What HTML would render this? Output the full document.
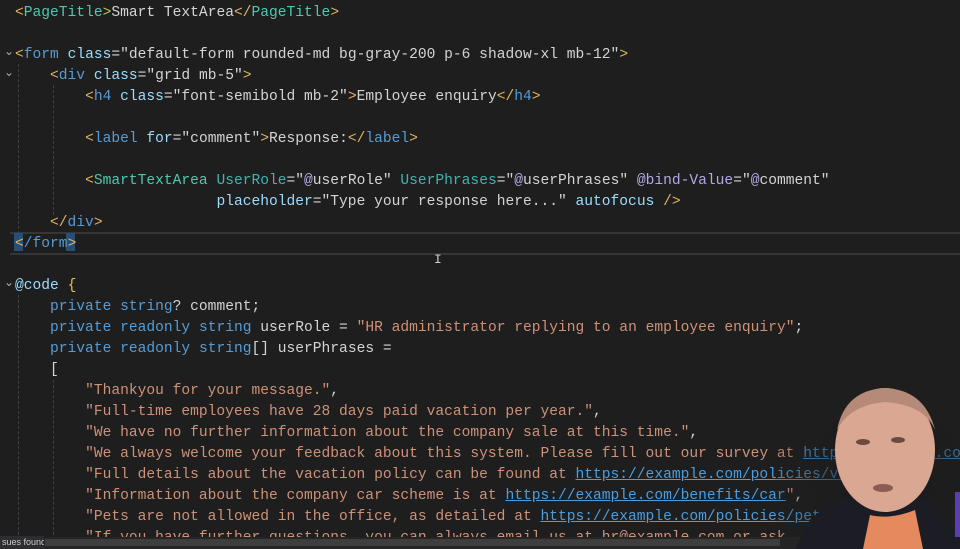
<!DOCTYPE html>
<html><head><meta charset="utf-8"><style>
html,body{margin:0;padding:0;background:#1e1e1e;width:960px;height:549px;overflow:hidden;position:relative}
.code{position:absolute;left:15px;top:3px;font-family:"Liberation Mono",monospace;font-size:14.6px;line-height:21px;color:#d4d4d4;white-space:normal}
.l{height:21px;white-space:pre}
.b{color:#e0b460}.t{color:#4ec9b0}.h{color:#569cd6}.a{color:#9cdcfe}.ta{color:#3fb5b0}.p{color:#b4a7e8}
.k{color:#569cd6}.s{color:#ce9178}.u{color:#4a9ee0;text-decoration:underline}.y{color:#e8c43f}
.cur{position:absolute;left:10px;right:0;top:232px;height:19px;border-top:2px solid #353535;border-bottom:2px solid #353535}
.guide{position:absolute;width:0;border-left:1px dashed #404040}
.sb{position:absolute;left:0;top:537px;width:960px;height:12px;background:#252526}
.thumb{position:absolute;left:45px;top:539px;width:735px;height:7px;background:#3e3e3e}
</style></head><body>
<div class="cur"></div>
<div class="guide" style="left:18px;top:64px;height:170px"></div>
<div class="guide" style="left:53px;top:85px;height:130px"></div>
<div class="guide" style="left:18px;top:295px;height:240px"></div>
<div class="guide" style="left:53px;top:380px;height:155px"></div>
<div style="position:absolute;left:4px;top:44px;color:#aaa;font:12px 'DejaVu Sans';">⌄</div>
<div style="position:absolute;left:4px;top:65px;color:#aaa;font:12px 'DejaVu Sans';">⌄</div>
<div style="position:absolute;left:4px;top:275px;color:#aaa;font:12px 'DejaVu Sans';">⌄</div>
<div style="position:absolute;left:14px;top:233px;width:9px;height:18px;background:#264f78"></div>
<div style="position:absolute;left:66px;top:233px;width:9px;height:18px;background:#264f78"></div>
<div class="code"><div class="l"><span class="b">&lt;</span><span class="t">PageTitle</span><span class="b">&gt;</span>Smart TextArea<span class="b">&lt;/</span><span class="t">PageTitle</span><span class="b">&gt;</span></div><div class="l"> </div><div class="l"><span class="b">&lt;</span><span class="h">form</span> <span class="a">class</span>="default-form rounded-md bg-gray-200 p-6 shadow-xl mb-12"<span class="b">&gt;</span></div><div class="l">    <span class="b">&lt;</span><span class="h">div</span> <span class="a">class</span>="grid mb-5"<span class="b">&gt;</span></div><div class="l">        <span class="b">&lt;</span><span class="h">h4</span> <span class="a">class</span>="font-semibold mb-2"<span class="b">&gt;</span>Employee enquiry<span class="b">&lt;/</span><span class="h">h4</span><span class="b">&gt;</span></div><div class="l"> </div><div class="l">        <span class="b">&lt;</span><span class="h">label</span> <span class="a">for</span>="comment"<span class="b">&gt;</span>Response:<span class="b">&lt;/</span><span class="h">label</span><span class="b">&gt;</span></div><div class="l"> </div><div class="l">        <span class="b">&lt;</span><span class="t">SmartTextArea</span> <span class="ta">UserRole</span>="<span class="p">@</span>userRole" <span class="ta">UserPhrases</span>="<span class="p">@</span>userPhrases" <span class="p">@bind-Value</span>="<span class="p">@</span>comment"</div><div class="l">                       <span class="a">placeholder</span>="Type your response here..." <span class="a">autofocus</span> <span class="b">/&gt;</span></div><div class="l">    <span class="b">&lt;/</span><span class="h">div</span><span class="b">&gt;</span></div><div class="l"><span class="b">&lt;</span><span class="h">/form</span><span class="b">&gt;</span></div><div class="l"> </div><div class="l"><span class="a">@code</span> <span class="y">{</span></div><div class="l">    <span class="k">private</span> <span class="k">string</span>? comment;</div><div class="l">    <span class="k">private</span> <span class="k">readonly</span> <span class="k">string</span> userRole = <span class="s">"HR administrator replying to an employee enquiry"</span>;</div><div class="l">    <span class="k">private</span> <span class="k">readonly</span> <span class="k">string</span>[] userPhrases =</div><div class="l">    [</div><div class="l">        <span class="s">"Thankyou for your message."</span>,</div><div class="l">        <span class="s">"Full-time employees have 28 days paid vacation per year."</span>,</div><div class="l">        <span class="s">"We have no further information about the company sale at this time."</span>,</div><div class="l">        <span class="s">"We always welcome your feedback about this system. Please fill out our survey at </span><span class="u">https://example.com</span></div><div class="l">        <span class="s">"Full details about the vacation policy can be found at </span><span class="u">https://example.com/policies/vacation</span></div><div class="l">        <span class="s">"Information about the company car scheme is at </span><span class="u">https://example.com/benefits/car</span><span class="s">"</span>,</div><div class="l">        <span class="s">"Pets are not allowed in the office, as detailed at </span><span class="u">https://example.com/policies/pets</span></div><div class="l">        <span class="s">"If you have further questions, you can always email us at hr@example.com or ask</span></div></div>
<div style="position:absolute;left:434px;top:252px;color:#ccc;font:13px 'Liberation Mono'">I</div>
<div class="sb"></div><div class="thumb"></div>
<div style="position:absolute;left:0;top:536px;width:42px;height:13px;background:#2d2d30;color:#ccc;font:9px 'Liberation Sans';line-height:13px;padding-left:2px;white-space:nowrap;overflow:hidden">sues found</div>
<svg style="position:absolute;left:775px;top:370px" width="185" height="179">
<defs><radialGradient id="bg" cx="0.6" cy="0.6" r="0.7"><stop offset="0" stop-color="#1a1a1e" stop-opacity="0.9"/><stop offset="1" stop-color="#1e1e1e" stop-opacity="0"/></radialGradient></defs>
<rect x="0" y="0" width="185" height="179" fill="url(#bg)"/>
<path d="M20 179 L35 150 Q60 125 90 128 L120 120 Q150 125 170 150 L185 165 L185 179Z" fill="#1c1d24"/>
<path d="M88 179 L95 145 Q115 150 140 140 L148 179Z" fill="#e58a5e"/>
<ellipse cx="110" cy="80" rx="50" ry="62" fill="#d9a792"/>
<path d="M62 60 Q70 20 110 18 Q150 20 160 60 Q150 35 110 32 Q75 35 62 60Z" fill="#b58a78"/>
<ellipse cx="88" cy="72" rx="7" ry="3" fill="#6b4a40"/>
<ellipse cx="123" cy="70" rx="7" ry="3" fill="#6b4a40"/>
<ellipse cx="108" cy="118" rx="10" ry="4" fill="#8a5c52"/>
<rect x="180" y="122" width="5" height="45" fill="#5b3fb0"/>
</svg>
</body></html>
